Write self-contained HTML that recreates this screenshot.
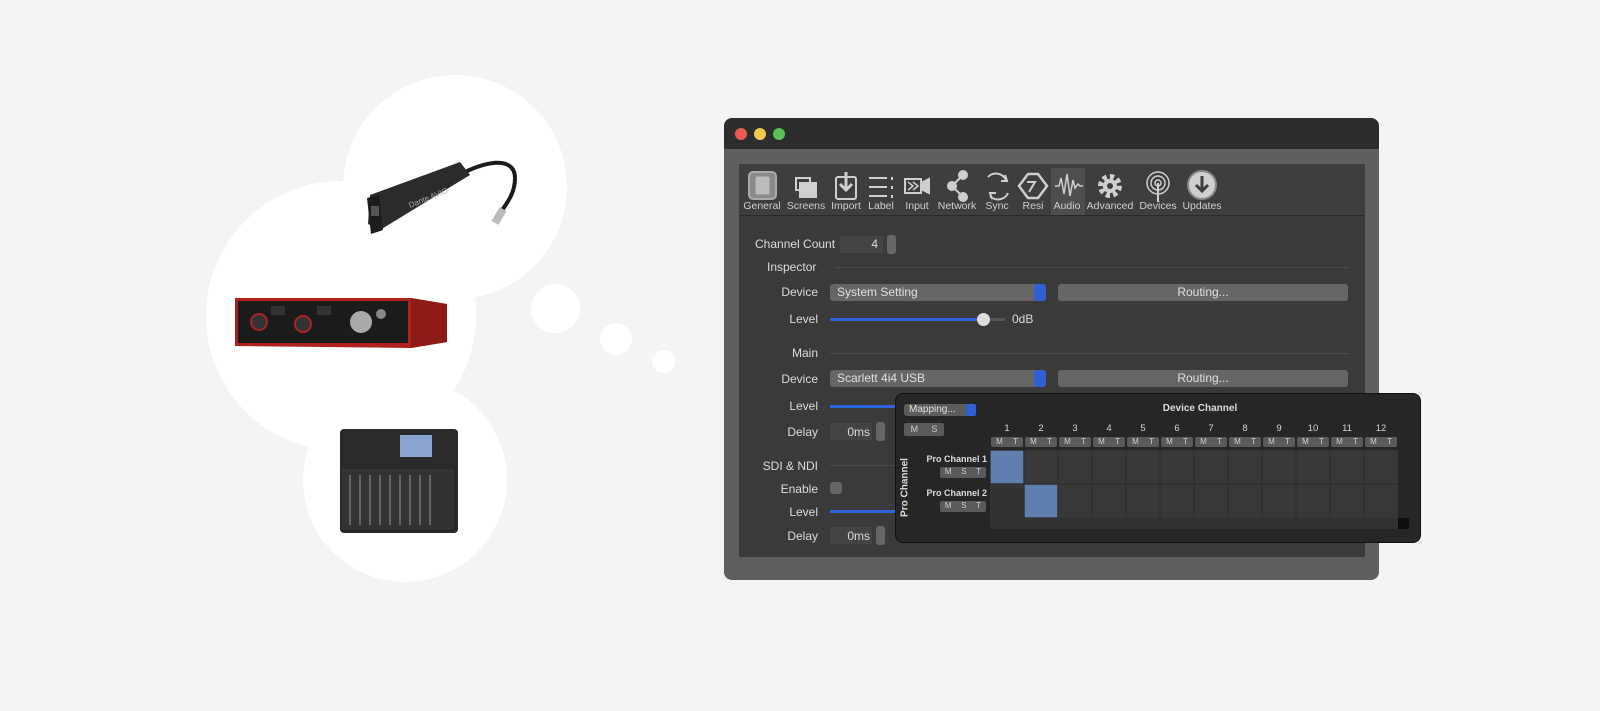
<!DOCTYPE html>
<html><head><meta charset="utf-8"><style>
*{margin:0;padding:0;box-sizing:border-box}
body{width:1600px;height:711px;background:#f4f4f4;position:relative;overflow:hidden;font-family:"Liberation Sans",sans-serif}
.a{position:absolute}
.c{position:absolute;border-radius:50%;background:#fff}
.t{position:absolute;color:#dcdcdc;font-size:11px;white-space:nowrap}
.lbl{position:absolute;color:#ddd;font-size:12px;white-space:nowrap}
.r{text-align:right}
.btn{position:absolute;background:#666;border-radius:3px;color:#e0e0e0;font-size:11px}
.mt{position:absolute;background:#5a5a5a;border-radius:2px;color:#cfcfcf;font-size:8px;height:10px;line-height:10px;display:flex;justify-content:space-around}
.cap{position:absolute;color:#d8d8d8;font-size:9.5px;width:70px;text-align:center}
.tb{position:absolute;top:200px;width:60px;text-align:center;font-size:10.5px;color:#d0d0d0;white-space:nowrap}
</style></head><body>
<!-- cloud -->
<div class="c" style="left:343px;top:75px;width:224px;height:224px"></div>
<div class="c" style="left:206px;top:181px;width:270px;height:270px"></div>
<div class="c" style="left:303px;top:378px;width:204px;height:204px"></div>
<div class="c" style="left:531px;top:284px;width:49px;height:49px"></div>
<div class="c" style="left:600px;top:323px;width:32px;height:32px"></div>
<div class="c" style="left:652px;top:350px;width:23px;height:23px"></div>
<!-- dante adapter -->
<svg class="a" style="left:365px;top:150px" width="170" height="95">
<path d="M100 22 C130 8 150 10 150 28 C150 45 140 55 136 62" stroke="#1a1a1a" stroke-width="4" fill="none"/>
<rect x="130" y="58" width="8" height="16" fill="#bbb" transform="rotate(30 134 66)"/>
<path d="M5 45 L95 12 L105 25 L15 80 L3 74 Z" fill="#2b2b2b"/>
<path d="M2 48 L14 45 L18 80 L6 84 Z" fill="#1c1c1c"/>
<rect x="6" y="56" width="8" height="10" fill="#555"/>
<text x="45" y="58" fill="#aaa" font-size="8" transform="rotate(-22 45 58)">Dante AVIO</text>
</svg>
<!-- focusrite -->
<svg class="a" style="left:235px;top:294px" width="214" height="60">
<path d="M0 4 L176 4 L212 10 L212 48 L176 54 L0 52 Z" fill="#b0201c"/>
<path d="M176 4 L212 10 L212 48 L176 54 Z" fill="#8e1a16"/>
<rect x="3" y="7" width="170" height="42" fill="#1b1b1b"/>
<circle cx="24" cy="28" r="8" fill="#333" stroke="#a22" stroke-width="2"/>
<circle cx="68" cy="30" r="8" fill="#333" stroke="#a22" stroke-width="2"/>
<rect x="36" y="12" width="14" height="9" fill="#333"/><rect x="82" y="12" width="14" height="9" fill="#333"/>
<circle cx="126" cy="28" r="11" fill="#aaa"/><circle cx="146" cy="20" r="5" fill="#888"/>
</svg>
<!-- mixer -->
<svg class="a" style="left:338px;top:427px" width="124" height="110">
<rect x="2" y="2" width="118" height="104" rx="4" fill="#2a2a2a"/>
<rect x="62" y="8" width="32" height="22" fill="#8aa4d0"/>
<rect x="4" y="42" width="112" height="60" fill="#333"/>
<g stroke="#777" stroke-width="1.5"><path d="M12 48v50M22 48v50M32 48v50M42 48v50M52 48v50M62 48v50M72 48v50M82 48v50M92 48v50"/></g>
</svg>
<!-- window -->
<div class="a" style="left:724px;top:118px;width:655px;height:462px;background:#5f5f5f;border-radius:8px;overflow:hidden">
<div class="a" style="left:0;top:0;width:655px;height:31px;background:#2d2d2d"></div>
<div class="a" style="left:11px;top:10px;width:12px;height:12px;border-radius:50%;background:#ec5b53"></div>
<div class="a" style="left:30px;top:10px;width:12px;height:12px;border-radius:50%;background:#f2c94f"></div>
<div class="a" style="left:49px;top:10px;width:12px;height:12px;border-radius:50%;background:#5bc157"></div>
</div>
<div class="a" style="left:739px;top:164px;width:626px;height:393px;background:#3a3a3a"></div>
<div class="a" style="left:739px;top:164px;width:626px;height:52px;background:#3e3e3e;border-bottom:1px solid #2a2a2a"></div>
<div class="a" style="left:1051px;top:168px;width:34px;height:47px;background:#4e4e4e"></div>
<!-- toolbar icons -->
<svg class="a" style="left:739px;top:169px" width="490" height="36" fill="none" stroke="#cfcfcf" stroke-width="2">
<rect x="10" y="3" width="27" height="27" rx="4" fill="#8a8a8a" stroke="#aaa"/><rect x="16" y="7" width="15" height="19" rx="2" fill="#bbb" stroke="#888" stroke-width="1"/>
<g transform="translate(3,0)"><rect x="54" y="9" width="14" height="12"/><rect x="58" y="14" width="16" height="14" fill="#cfcfcf"/></g>
<g transform="translate(5,0)"><rect x="92" y="8" width="20" height="22" rx="2"/><path d="M102 3v17M96 15l6 6 6-6" stroke-width="3"/></g>
<g transform="translate(15,0)"><path d="M115 9h18M115 18h18M115 27h18M138 8v3M138 17v3M138 26v3"/></g>
<g transform="translate(17,0)"><rect x="149" y="10" width="16" height="14"/><path d="M152 13l5 4-5 4M157 13l5 4-5 4" stroke-width="1.5"/><path d="M167 13l6-3v14l-6-3z" fill="#cfcfcf"/></g>
<g transform="translate(17,0)"><circle cx="196" cy="17" r="4" fill="#cfcfcf"/><circle cx="207" cy="6" r="4" fill="#cfcfcf"/><circle cx="207" cy="28" r="4" fill="#cfcfcf"/><path d="M196 17l11-11M196 17l11 11"/></g>
<g transform="translate(17,0)"><path d="M232 8a11 11 0 0 1 18 3M252 24a11 11 0 0 1-18 3"/><path d="M249 6l2 6-6 0M236 30l-2-6 6 0"/></g>
<g transform="translate(12,0)"><path d="M268 17l9-12h10l9 12-9 12h-10z" stroke-width="2.5"/><path d="M276 13h8l-6 10"/></g>
<g transform="translate(20,0)"><path d="M296 17h4l2-8 3 16 3-20 3 22 3-16 2 8 3-4 2 2h3" stroke-width="1.5"/></g>
<g transform="translate(21,0)"><circle cx="350" cy="17" r="9" stroke-width="6" stroke-dasharray="4 3"/><circle cx="350" cy="17" r="7" fill="#cfcfcf" stroke="none"/><circle cx="350" cy="17" r="3" fill="#3e3e3e" stroke="none"/></g>
<g transform="translate(22,0)"><circle cx="397" cy="14" r="11" stroke-width="1.5"/><circle cx="397" cy="14" r="7" stroke-width="1.5"/><circle cx="397" cy="14" r="3" stroke-width="1.5"/><path d="M397 14v19"/></g>
<g transform="translate(23,0)"><circle cx="440" cy="16" r="14" fill="#cfcfcf" stroke="#888"/><path d="M440 7v14M434 16l6 6 6-6" stroke="#3e3e3e" stroke-width="3"/></g>
</svg>
<div class="tb" style="left:732px">General</div>
<div class="tb" style="left:776px">Screens</div>
<div class="tb" style="left:816px">Import</div>
<div class="tb" style="left:851px">Label</div>
<div class="tb" style="left:887px">Input</div>
<div class="tb" style="left:927px">Network</div>
<div class="tb" style="left:967px">Sync</div>
<div class="tb" style="left:1003px">Resi</div>
<div class="tb" style="left:1037px">Audio</div>
<div class="tb" style="left:1080px">Advanced</div>
<div class="tb" style="left:1128px">Devices</div>
<div class="tb" style="left:1172px">Updates</div>
<!-- content -->
<div class="lbl" style="left:755px;top:237px">Channel Count</div>
<div class="a" style="left:840px;top:236px;width:43px;height:17px;background:#444"></div>
<div class="lbl" style="left:840px;top:237px;width:38px;text-align:right">4</div>
<div class="a" style="left:887px;top:235px;width:9px;height:19px;background:#666;border-radius:3px"></div>
<div class="lbl" style="left:767px;top:260px">Inspector</div>
<div class="a" style="left:835px;top:267px;width:514px;height:1px;background:#4a4a4a"></div>
<div class="lbl r" style="left:760px;top:285px;width:58px">Device</div>
<div class="btn" style="left:830px;top:284px;width:216px;height:17px;line-height:17px;padding-left:7px;font-size:12px">System Setting</div>
<div class="a" style="left:1034px;top:284px;width:12px;height:17px;background:#2f5fd0;border-radius:3px"></div>
<div class="btn" style="left:1058px;top:284px;width:290px;height:17px;line-height:17px;text-align:center;font-size:12px">Routing...</div>
<div class="lbl r" style="left:760px;top:312px;width:58px">Level</div>
<div class="a" style="left:830px;top:318px;width:153px;height:3px;background:#2d63db;border-radius:2px"></div>
<div class="a" style="left:983px;top:318px;width:22px;height:3px;background:#555"></div>
<div class="a" style="left:977px;top:313px;width:13px;height:13px;border-radius:50%;background:#ddd"></div>
<div class="lbl" style="left:1012px;top:312px">0dB</div>
<div class="lbl r" style="left:760px;top:346px;width:58px">Main</div>
<div class="a" style="left:830px;top:353px;width:519px;height:1px;background:#4a4a4a"></div>
<div class="lbl r" style="left:760px;top:372px;width:58px">Device</div>
<div class="btn" style="left:830px;top:370px;width:216px;height:17px;line-height:17px;padding-left:7px;font-size:12px">Scarlett 4i4 USB</div>
<div class="a" style="left:1034px;top:370px;width:12px;height:17px;background:#2f5fd0;border-radius:3px"></div>
<div class="btn" style="left:1058px;top:370px;width:290px;height:17px;line-height:17px;text-align:center;font-size:12px">Routing...</div>
<div class="lbl r" style="left:760px;top:399px;width:58px">Level</div>
<div class="a" style="left:830px;top:405px;width:70px;height:3px;background:#2d63db"></div>
<div class="lbl r" style="left:760px;top:425px;width:58px">Delay</div>
<div class="a" style="left:830px;top:423px;width:42px;height:17px;background:#444"></div>
<div class="lbl" style="left:830px;top:425px;width:40px;text-align:right">0ms</div>
<div class="a" style="left:876px;top:422px;width:9px;height:19px;background:#666;border-radius:3px"></div>
<div class="lbl r" style="left:750px;top:459px;width:68px">SDI &amp; NDI</div>
<div class="a" style="left:830px;top:465px;width:70px;height:1px;background:#4a4a4a"></div>
<div class="lbl r" style="left:760px;top:482px;width:58px">Enable</div>
<div class="a" style="left:830px;top:482px;width:12px;height:12px;background:#666;border-radius:3px"></div>
<div class="lbl r" style="left:760px;top:505px;width:58px">Level</div>
<div class="a" style="left:830px;top:510px;width:70px;height:3px;background:#2d63db"></div>
<div class="lbl r" style="left:760px;top:529px;width:58px">Delay</div>
<div class="a" style="left:830px;top:527px;width:42px;height:17px;background:#444"></div>
<div class="lbl" style="left:830px;top:529px;width:40px;text-align:right">0ms</div>
<div class="a" style="left:876px;top:526px;width:9px;height:19px;background:#666;border-radius:3px"></div>
<!-- popup -->
<div class="a" style="left:895px;top:393px;width:526px;height:150px;background:#262626;border-radius:8px;border:1px solid #111"></div>
<div class="btn" style="left:904px;top:404px;width:71px;height:12px;line-height:12px;padding-left:5px;font-size:10px;background:#5c5c5c">Mapping...</div>
<div class="a" style="left:966px;top:404px;width:10px;height:12px;background:#2f5fd0;border-radius:2px"></div>
<div class="t" style="left:1150px;top:403px;width:100px;text-align:center;font-size:10px;font-weight:bold">Device Channel</div>
<div class="mt" style="left:904px;top:423px;width:40px;height:13px;line-height:13px;font-size:9px"><span>M</span><span>S</span></div>
<div class="a" style="left:990px;top:450px;width:408px;height:68px;background:#383838"></div>
<div class="a" style="left:990px;top:518px;width:408px;height:11px;background:#323232"></div>
<div class="a" style="left:1398px;top:518px;width:11px;height:11px;background:#0e0e0e"></div>
<svg class="a" style="left:990px;top:450px" width="408" height="68"><g stroke="#2c2c2c" stroke-width="1"><path d="M34 0v68M68 0v68M102 0v68M136 0v68M170 0v68M204 0v68M238 0v68M272 0v68M306 0v68M340 0v68M374 0v68M0 34h408"/></g>
<rect x="0" y="34" width="34" height="34" fill="#333"/>
<rect x="0.5" y="0.5" width="33" height="33" fill="#5f7fb0" stroke="#333" stroke-dasharray="1 1"/><rect x="34.5" y="34.5" width="33" height="33" fill="#5f7fb0" stroke="#333" stroke-dasharray="1 1"/>
</svg>
<div class="cap" style="left:972px;top:423px">1</div><div class="cap" style="left:1006px;top:423px">2</div><div class="cap" style="left:1040px;top:423px">3</div><div class="cap" style="left:1074px;top:423px">4</div><div class="cap" style="left:1108px;top:423px">5</div><div class="cap" style="left:1142px;top:423px">6</div><div class="cap" style="left:1176px;top:423px">7</div><div class="cap" style="left:1210px;top:423px">8</div><div class="cap" style="left:1244px;top:423px">9</div><div class="cap" style="left:1278px;top:423px">10</div><div class="cap" style="left:1312px;top:423px">11</div><div class="cap" style="left:1346px;top:423px">12</div>
<div class="mt" style="left:991px;top:437px;width:32px"><span>M</span><span>T</span></div><div class="mt" style="left:1025px;top:437px;width:32px"><span>M</span><span>T</span></div><div class="mt" style="left:1059px;top:437px;width:32px"><span>M</span><span>T</span></div><div class="mt" style="left:1093px;top:437px;width:32px"><span>M</span><span>T</span></div><div class="mt" style="left:1127px;top:437px;width:32px"><span>M</span><span>T</span></div><div class="mt" style="left:1161px;top:437px;width:32px"><span>M</span><span>T</span></div><div class="mt" style="left:1195px;top:437px;width:32px"><span>M</span><span>T</span></div><div class="mt" style="left:1229px;top:437px;width:32px"><span>M</span><span>T</span></div><div class="mt" style="left:1263px;top:437px;width:32px"><span>M</span><span>T</span></div><div class="mt" style="left:1297px;top:437px;width:32px"><span>M</span><span>T</span></div><div class="mt" style="left:1331px;top:437px;width:32px"><span>M</span><span>T</span></div><div class="mt" style="left:1365px;top:437px;width:32px"><span>M</span><span>T</span></div>
<div class="t" style="left:870px;top:482px;transform:rotate(-90deg);font-size:10px;font-weight:bold;width:70px;text-align:center">Pro Channel</div>
<div class="t" style="left:915px;top:454px;width:72px;text-align:right;font-size:9px;font-weight:bold">Pro Channel 1</div>
<div class="mt" style="left:940px;top:467px;width:46px;height:11px"><span>M</span><span>S</span><span>T</span></div>
<div class="t" style="left:915px;top:488px;width:72px;text-align:right;font-size:9px;font-weight:bold">Pro Channel 2</div>
<div class="mt" style="left:940px;top:501px;width:46px;height:11px"><span>M</span><span>S</span><span>T</span></div>
</body></html>
